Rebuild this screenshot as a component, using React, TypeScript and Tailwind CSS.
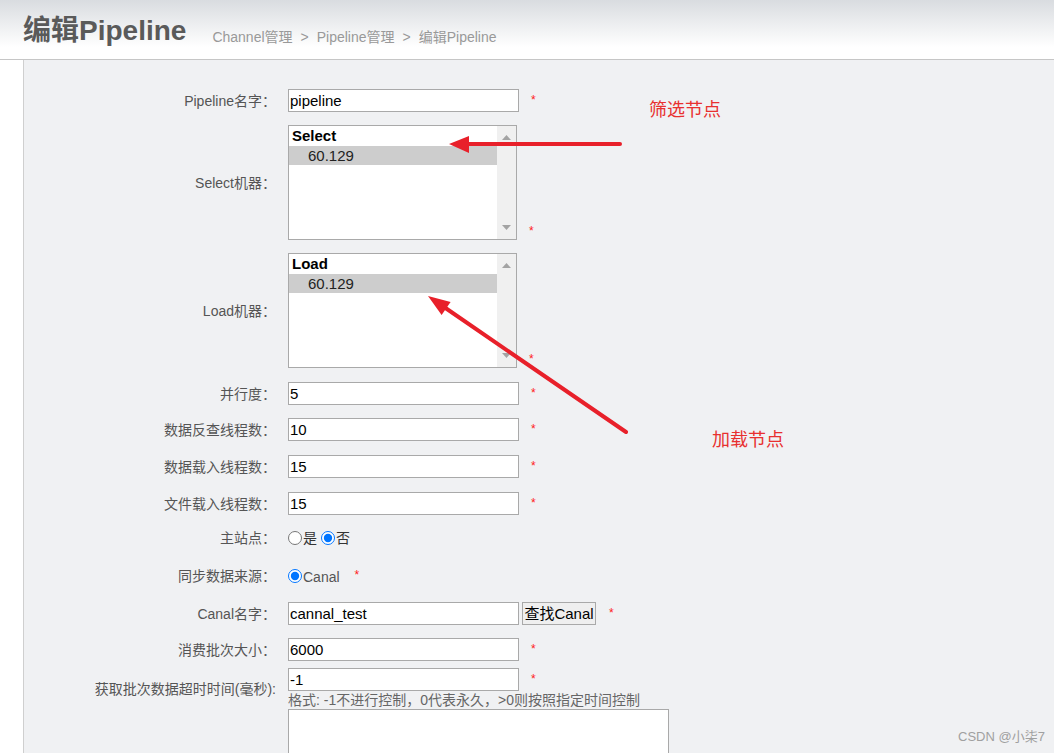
import React from 'react';

const font = "font-['Liberation_Sans','Noto_Sans_CJK_SC',sans-serif]";

const Star = ({ className = '' }: { className?: string }) => (
    <span className={`text-[12px] leading-[12px] text-[#ff2020] ${className}`}>*</span>
);

const Label = ({ children }: { children: React.ReactNode }) => (
    <div className="w-[252px] shrink-0 text-right text-[14px] leading-[20px] text-[#555]">{children}</div>
);

const TextInput = ({ value }: { value: string }) => (
    <div className="w-[231px] h-[23px] border border-[#a9a9a9] bg-white pl-[1px] text-[15px] leading-[21px] text-black">
        {value}
    </div>
);

const Tri = ({ up }: { up?: boolean }) => (
    <svg width="9" height="5" viewBox="0 0 9 5">
        <polygon points={up ? '0,5 9,5 4.5,0' : '0,0 9,0 4.5,5'} fill="#a3a3a3" />
    </svg>
);

const ListBox = ({ title }: { title: string }) => (
    <div className="w-[229px] h-[115px] border border-[#a9a9a9] bg-white flex">
        <div className="flex-1">
            <div className="h-[20px] leading-[20px] pl-[3px] text-[15px] font-bold text-black">{title}</div>
            <div className="h-[19px] leading-[19px] pl-[19px] bg-[#cdcdcd] text-[15px] text-[#222]">60.129</div>
        </div>
        <div className="w-[19px] bg-[#f0f0f0] flex flex-col items-center justify-between pt-[9px] pb-[9px]">
            <Tri up />
            <Tri />
        </div>
    </div>
);

const InputRow = ({ label, value, className = '' }: { label: string; value: string; className?: string }) => (
    <div className={`flex items-center ${className}`}>
        <Label>{label}</Label>
        <div className="ml-[12px] flex items-center">
            <TextInput value={value} />
            <Star className="ml-[12px] -mt-[2px]" />
        </div>
    </div>
);

const Radio = ({ checked }: { checked?: boolean }) => (
    <input type="radio" readOnly checked={!!checked} className="m-0 w-[14px] h-[14px] shrink-0" />
);

export default function App() {
    return (
        <div className={`relative w-full h-[753px] overflow-hidden bg-white ${font}`}>
            {/* Header */}
            <div className="h-[60px] border-b border-[#c6c6c6] bg-[linear-gradient(to_bottom,#d9dce0,#ffffff_80%)] pl-[23px] pt-[13px] flex items-end pb-[10px]">
                <h1 className="text-[28px] leading-[36px] font-bold text-[#5a5a5a]">编辑Pipeline</h1>
                <div className="ml-[26px] mb-[2px] text-[14px] leading-[20px] text-[#999]">
                    Channel管理<span className="px-[8px]">&gt;</span>Pipeline管理<span className="px-[8px]">&gt;</span>编辑Pipeline
                </div>
            </div>

            {/* Form panel */}
            <div className="ml-[23px] h-full border-l border-[#cfcfcf] bg-[#f0f1f3] pt-[29px]">
                <InputRow label="Pipeline名字：" value="pipeline" />

                <div className="flex items-center mt-[13px]">
                    <Label>Select机器：</Label>
                    <div className="ml-[12px] flex items-end">
                        <ListBox title="Select" />
                        <Star className="ml-[12px] mb-[3px]" />
                    </div>
                </div>

                <div className="flex items-center mt-[13px]">
                    <Label>Load机器：</Label>
                    <div className="ml-[12px] flex items-end">
                        <ListBox title="Load" />
                        <Star className="ml-[12px] mb-[3px]" />
                    </div>
                </div>

                <InputRow label="并行度：" value="5" className="mt-[14px]" />
                <InputRow label="数据反查线程数：" value="10" className="mt-[13px]" />
                <InputRow label="数据载入线程数：" value="15" className="mt-[14px]" />
                <InputRow label="文件载入线程数：" value="15" className="mt-[14px]" />

                <div className="flex items-center mt-[13px] h-[20px]">
                    <Label>主站点：</Label>
                    <div className="ml-[12px] flex items-center text-[14px] text-[#333]">
                        <Radio />
                        <span className="ml-[1px]">是</span>
                        <span className="ml-[4px] flex items-center"><Radio checked /></span>
                        <span className="ml-[1px]">否</span>
                    </div>
                </div>

                <div className="flex items-center mt-[18px] h-[20px]">
                    <Label>同步数据来源：</Label>
                    <div className="ml-[12px] flex items-center text-[14px] text-[#555]">
                        <Radio checked />
                        <span className="ml-[1px] mt-[2px]">Canal</span>
                        <Star className="ml-[15px] -mt-[2px]" />
                    </div>
                </div>

                <div className="flex items-center mt-[16px]">
                    <Label>Canal名字：</Label>
                    <div className="ml-[12px] flex items-center">
                        <TextInput value="cannal_test" />
                        <div className="ml-[3px] w-[74px] h-[23px] border border-[#a9a9a9] bg-[#efefef] text-center text-[15px] leading-[21px] text-black">
                            查找Canal
                        </div>
                        <Star className="ml-[13px] -mt-[2px]" />
                    </div>
                </div>

                <InputRow label="消费批次大小：" value="6000" className="mt-[13px]" />

                <div className="flex items-center mt-[7px]">
                    <Label>获取批次数据超时时间(毫秒):</Label>
                    <div className="ml-[12px] flex flex-col">
                        <div className="flex items-center">
                            <TextInput value="-1" />
                            <Star className="ml-[12px] -mt-[2px]" />
                        </div>
                        <div className="text-[14px] leading-[18px] text-[#666]">
                            格式: -1不进行控制，0代表永久，&gt;0则按照指定时间控制
                        </div>
                    </div>
                </div>

                <div className="flex">
                    <div className="w-[252px] shrink-0" />
                    <div className="ml-[12px] w-[381px] h-[90px] border border-[#a9a9a9] bg-white" />
                </div>
            </div>

            {/* Annotations */}
            <svg className="absolute inset-0 pointer-events-none" width="1054" height="753" viewBox="0 0 1054 753">
                <line x1="620" y1="144" x2="464" y2="144" stroke="#e8202a" strokeWidth="4" strokeLinecap="round" />
                <polygon points="449,144 469,136 469,153" fill="#e8202a" />
                <line x1="626" y1="432" x2="444" y2="307" stroke="#e8202a" strokeWidth="4" strokeLinecap="round" />
                <polygon points="428,296 441.6,315.1 450.6,301.9" fill="#e8202a" />
            </svg>
            <div className="absolute left-[649px] top-[101px] text-[18px] leading-[18px] text-[#e8302f]">筛选节点</div>
            <div className="absolute left-[712px] top-[431px] text-[18px] leading-[18px] text-[#e8302f]">加载节点</div>
            <div className="absolute left-[958px] top-[729px] text-[13px] leading-[16px] text-[#a0a0a0]">CSDN @小柒7</div>
        </div>
    );
}
